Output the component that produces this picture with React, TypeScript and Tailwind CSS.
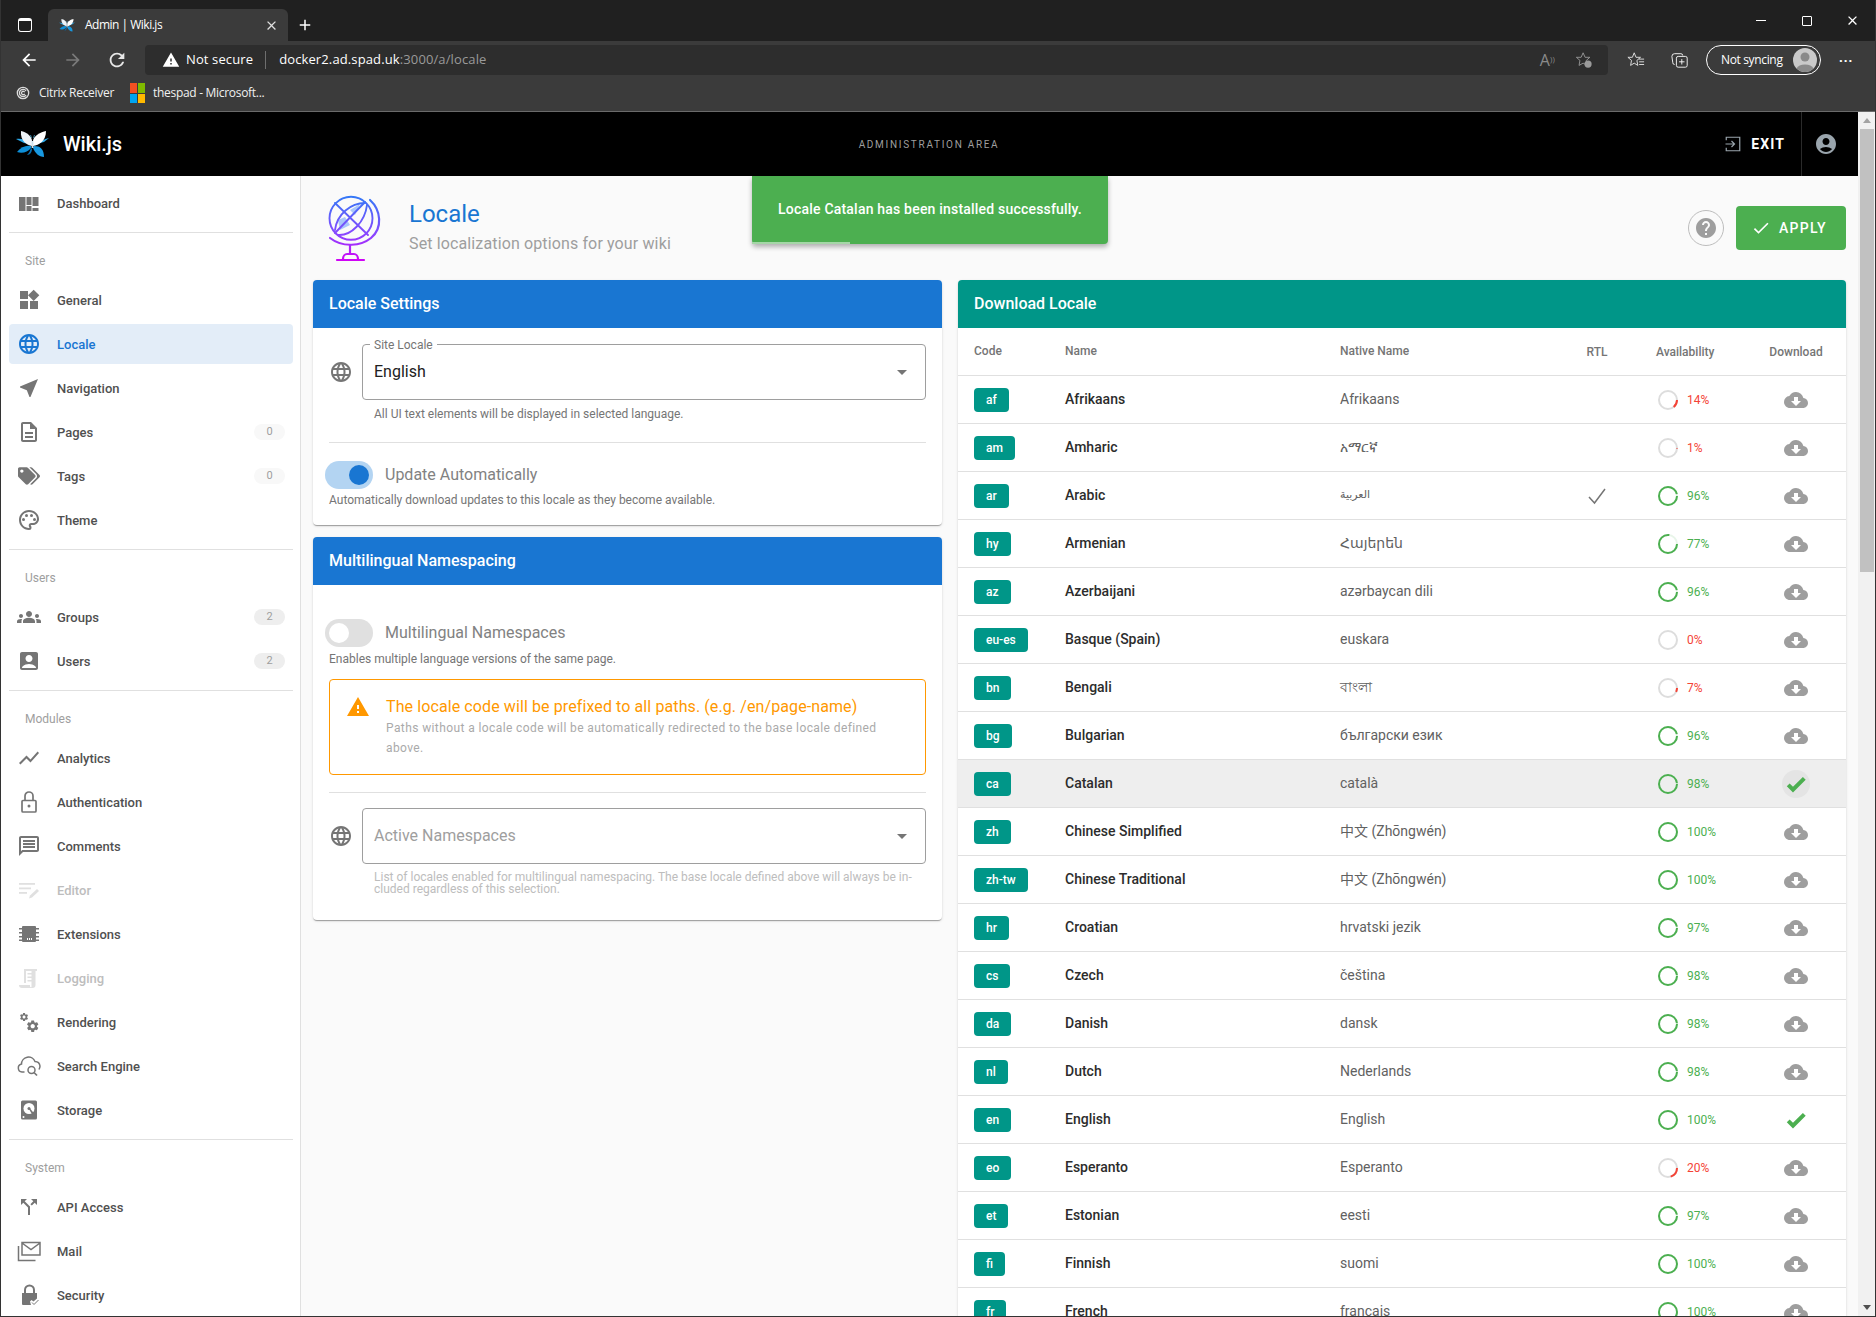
import { ReactNode } from 'react';
import {
  MdAccountBox,
  MdAccountCircle,
  MdAdd,
  MdArrowBack,
  MdArrowForward,
  MdCallSplit,
  MdCheck,
  MdClose,
  MdCloudDownload,
  MdGroups,
  MdHelp,
  MdLanguage,
  MdNearMe,
  MdOutlineDescription,
  MdOutlineMessage,
  MdOutlinePalette,
  MdRefresh,
  MdShowChart,
  MdWarning,
  MdWidgets,
} from 'react-icons/md';
import { FaTags } from 'react-icons/fa';

const GEAR =
  'M19.14 12.94c.04-.3.06-.61.06-.94 0-.32-.02-.64-.07-.94l2.03-1.58a.49.49 0 0 0 .12-.61l-1.92-3.32a.488.488 0 0 0-.59-.22l-2.39.96c-.5-.38-1.03-.7-1.62-.94l-.36-2.54a.484.484 0 0 0-.48-.41h-3.84c-.24 0-.43.17-.47.41l-.36 2.54c-.59.24-1.13.57-1.62.94l-2.39-.96c-.22-.08-.47 0-.59.22L2.74 8.87c-.12.21-.08.47.12.61l2.03 1.58c-.05.3-.09.63-.09.94s.02.64.07.94l-2.03 1.58a.49.49 0 0 0-.12.61l1.92 3.32c.12.22.37.29.59.22l2.39-.96c.5.38 1.03.7 1.62.94l.36 2.54c.05.24.24.41.48.41h3.84c.24 0 .44-.17.47-.41l.36-2.54c.59-.24 1.13-.56 1.62-.94l2.39.96c.22.08.47 0 .59-.22l1.92-3.32c.12-.22.07-.47-.12-.61l-2.01-1.58zM12 15.6c-1.98 0-3.6-1.62-3.6-3.6s1.62-3.6 3.6-3.6 3.6 1.62 3.6 3.6-1.62 3.6-3.6 3.6z';

function Svg({ children, className = 'w-6 h-6' }: { children: ReactNode; className?: string }) {
  return (
    <svg viewBox="0 0 24 24" fill="currentColor" className={className}>
      {children}
    </svg>
  );
}

const DashboardIcon = () => (
  <Svg>
    <rect x="2" y="6" width="6.500" height="14" />
    <rect x="9.500" y="6" width="5" height="8" />
    <rect x="9.500" y="15" width="5" height="5" />
    <rect x="15.500" y="6" width="6" height="9" />
    <rect x="15.500" y="17" width="6" height="3" />
  </Svg>
);

const LockIcon = () => (
  <Svg>
    <path
      d="M6 10.500h12a1 1 0 0 1 1 1V21a1 1 0 0 1-1 1H6a1 1 0 0 1-1-1v-9.500a1 1 0 0 1 1-1zM8 10.500V6a4 4 0 0 1 8 0v4.500"
      fill="none"
      stroke="currentColor"
      strokeWidth="1.700"
    />
    <circle cx="12" cy="16" r="1.500" />
  </Svg>
);

const EditorIcon = () => (
  <Svg>
    <rect x="2" y="5" width="16" height="1.800" />
    <rect x="2" y="9.500" width="12" height="1.800" />
    <rect x="2" y="14" width="8" height="1.800" />
    <path d="M12 20.500l1-3L20 11l2 2-7 6.500z" />
  </Svg>
);

const ChipIcon = () => (
  <Svg>
    <rect x="5" y="4" width="14" height="16" rx="1" />
    <path d="M2 6h3v1.500H2zM2 10h3v1.500H2zM2 14h3v1.500H2zM2 17.500h3V19H2zM19 6h3v1.500h-3zM19 10h3v1.500h-3zM19 14h3v1.500h-3zM19 17.500h3V19h-3z" />
    <path d="M10 16h1v2h-1zM12 16h1v2h-1zM14 16h1v2h-1z" fill="#fff" />
  </Svg>
);

const LogIcon = () => (
  <Svg>
    <path d="M7 3h13v2h-1.500v14a3 3 0 0 1-3 3H5a3 3 0 0 1-3-3h11v1.500a1 1 0 0 0 1.500.500V5H9v12H7z" />
    <path d="M10.500 7h4.500v1.500h-4.500zM10.500 10.500h4.500V12h-4.500zM10.500 14h4.500v1.500h-4.500z" />
  </Svg>
);

const GearsIcon = () => (
  <Svg>
    <g transform="translate(2 2) scale(0.42)">
      <path d={GEAR} />
    </g>
    <g transform="translate(8.500 9) scale(0.6)">
      <path d={GEAR} />
    </g>
  </Svg>
);

const SearchCloudIcon = () => (
  <Svg>
    <path
      d="M7.500 18H5a4 4 0 0 1-.5-7.900A7 7 0 0 1 18 7.500 5.200 5.200 0 0 1 23 12c0 1.500-.5 2.500-1 3.500"
      fill="none"
      stroke="currentColor"
      strokeWidth="1.500"
    />
    <circle cx="14.500" cy="16" r="3.500" fill="none" stroke="currentColor" strokeWidth="1.500" />
    <path d="M17 18.500l3 3" stroke="currentColor" strokeWidth="1.700" />
  </Svg>
);

const DiskIcon = () => (
  <Svg>
    <rect x="4" y="2.500" width="16" height="19" rx="1.500" />
    <circle cx="12" cy="10.500" r="5.500" fill="#fff" />
    <circle cx="12" cy="10.500" r="1.500" />
    <path d="M12 11l4 7 2-1.500-5-6z" />
    <circle cx="6.500" cy="19" r="1" fill="#fff" />
  </Svg>
);

const MailStackIcon = () => (
  <Svg>
    <path
      d="M5 6.500v-3h18V16H5zM5 4l9 6.500L23 4M1.500 7v14.500h17"
      fill="none"
      stroke="currentColor"
      strokeWidth="1.500"
    />
  </Svg>
);

const SecurityIcon = () => (
  <Svg>
    <path d="M8 10V7a4.500 4.500 0 0 1 9 0v3" fill="none" stroke="currentColor" strokeWidth="2" />
    <path d="M5 10h15v5.500l-3.500 3-2-1.500-1.500 1.500 1 3.500H6a1 1 0 0 1-1-1z" />
    <path d="M15 19.500l2 2 4.500-4.500" fill="none" stroke="currentColor" strokeWidth="1" />
  </Svg>
);

function WikiLogo({ className }: { className: string }) {
  return (
    <svg viewBox="0 0 33 27" className={className}>
      <path d="M0 8c5-1 10 1 14 5l-6-1z" fill="#2aa7e8" />
      <path d="M33 7c-5 1-9 4-13 6l8-2z" fill="#2aa7e8" />
      <path d="M15 15c-5-1-10 1-14 6 5 2 11 0 14-4z" fill="#0d8fd8" />
      <path d="M18 15c6 0 10 3 10 11-5 0-9-4-11-9z" fill="#1898e0" />
      <path d="M15 17c-1 3-2 5-4 7 3 0 5-3 5-6z" fill="#0a6fb0" />
      <path d="M16 15C11 14 4 10 5 0c5 1 11 5 11 10z" fill="#eef3f7" />
      <path d="M17 15c6-1 13-5 13-15-5 1-13 5-13 10z" fill="#ffffff" />
      <path d="M15.600 10h1.800v7h-1.800z" fill="#cfe3ef" />
      <path d="M15.500 7l-1-3M17.500 7l1-3" stroke="#4aa3c9" strokeWidth="0.800" fill="none" />
    </svg>
  );
}

function GlobeLogo() {
  return (
    <svg viewBox="0 0 64 70" className="w-16 h-[70px]" fill="none">
      <defs>
        <linearGradient id="globeGrad" gradientUnits="userSpaceOnUse" x1="0" y1="0" x2="0" y2="68">
          <stop offset="0" stopColor="#2f7cf6" />
          <stop offset="0.6" stopColor="#8a45ff" />
          <stop offset="1" stopColor="#d400f5" />
        </linearGradient>
      </defs>
      <path d="M29 16l10-6-5 11zM17 26l7-3 5 8-10 5z" fill="#a9c6fb" />
      <g stroke="url(#globeGrad)" strokeWidth="1.900" strokeLinecap="round">
        <circle cx="30" cy="24.300" r="21.500" />
        <path d="M14 9l33 32M44 8L14 39" />
        <path d="M44 9C30 9 16 20 14 36M46 11C44 28 30 42 17 41" />
        <path d="M49 6C60 16 62 34 50 44 40 52 22 54 9 44" strokeWidth="2.200" />
        <path d="M29 51v9M22 65c0-3 2-5 4-5h7c2 0 4 2 4 5M16 66h27" strokeWidth="2.200" />
      </g>
    </svg>
  );
}

function MsLogo() {
  return (
    <span className="grid grid-cols-2 gap-px w-[15px] h-5">
      <span className="bg-[#f25022]" />
      <span className="bg-[#7fba00]" />
      <span className="bg-[#00a4ef]" />
      <span className="bg-[#ffb900]" />
    </span>
  );
}

function BrowserChrome() {
  return (
    <div className="font-['Open_Sans','Noto_Sans',sans-serif] text-white">
      <div className="h-[41px] bg-[#202020] flex items-end">
        <div className="w-[47px] h-[32px] flex items-center pl-[17px]">
          <span className="w-[14px] h-[14px] rounded-[3px] border border-white border-t-[3px]" />
        </div>
        <div className="w-[240px] h-[32px] rounded-t-md bg-[#3b3b3b] flex items-center pl-[11px] pr-[9px]">
          <WikiLogo className="w-[16px] h-[13px]" />
          <span className="ml-[10px] text-[12px] flex-1 tracking-[-0.5px]">Admin | Wiki.js</span>
          <MdClose className="w-[15px] h-[15px] text-[#e0e0e0]" />
        </div>
        <MdAdd className="ml-[8px] mb-[7px] w-[18px] h-[18px]" />
        <div className="flex-1" />
        <div className="h-[41px] flex items-center text-white">
          <span className="w-[10px] h-px bg-white mr-[36px]" />
          <span className="w-[10px] h-[10px] border border-white rounded-[1px] mr-[33px]" />
          <MdClose className="w-[15px] h-[15px] mr-[15px]" />
        </div>
      </div>
      <div className="h-[71px] bg-[#3b3b3b] border-b border-[#6a6a6a] flex flex-col">
        <div className="h-[34px] pt-1 flex items-start">
          <div className="w-[144px] h-[30px] flex items-center pl-[18px]">
            <MdArrowBack className="w-5 h-5 text-white" />
            <MdArrowForward className="w-5 h-5 ml-6 text-[#7a7a7a]" />
            <MdRefresh className="w-[22px] h-[22px] ml-[23px] text-[#e8e8e8]" />
          </div>
          <div className="w-[1463px] h-[30px] bg-[#2d2d2d] rounded flex items-center pl-[17px] text-[13px] tracking-[0.12px]">
            <MdWarning className="w-[18px] h-[18px] text-white" />
            <span className="ml-[6px]">Not secure</span>
            <span className="w-px h-[18px] bg-[#6e6e6e] ml-[12px]" />
            <span className="ml-[13px]">docker2.ad.spad.uk</span>
            <span className="text-[#9a9a9a]">:3000/a/locale</span>
            <span className="flex-1" />
            <span className="text-[#8a8a8a] text-[16px] leading-none mr-[20px]">
              A<sup className="text-[8px]">))</sup>
            </span>
            <svg viewBox="0 0 20 20" className="w-[18px] h-[18px] mr-[15px] text-[#9a9a9a]" fill="none" stroke="currentColor">
              <path d="M9 2l2.200 5h5.300l-4 3.500 1 5.500L9 13.500 4.500 16l1-5.500-4-3.500h5.300z" />
              <circle cx="14.500" cy="14.500" r="4" fill="#9a9a9a" stroke="none" />
            </svg>
          </div>
          <div className="h-[30px] flex items-center ml-[19px]">
            <svg viewBox="0 0 20 20" className="w-[18px] h-[18px]" fill="none" stroke="#e8e8e8">
              <path d="M8 2l2 5h5l-4 3.500 1 5.500-4-2.500L4 16l1-5.500-4-3.500h5zM13 9h6M13.500 12h5.500M13.500 15h5.500" />
            </svg>
            <svg viewBox="0 0 20 20" className="w-[18px] h-[18px] ml-[26px]" fill="none" stroke="#ffffff">
              <rect x="6" y="6" width="12" height="12" rx="2" />
              <path d="M12 9v6M9 12h6M4 15a2 2 0 0 1-2-2l-1-7a3 3 0 0 1 3-3h7a2 2 0 0 1 2 2" />
            </svg>
            <div className="w-[115px] h-[30px] ml-[17px] rounded-full border border-white flex items-center justify-between pl-[14px] pr-[3px] text-[12px] tracking-[-0.35px]">
              Not syncing
              <svg viewBox="0 0 24 24" className="w-6 h-6">
                <circle cx="12" cy="12" r="12" fill="#c9c9c9" />
                <circle cx="12" cy="9" r="4.500" fill="#8a8a8a" />
                <path d="M3.500 20.500a9 6 0 0 1 17 0A12 12 0 0 1 3.500 20.500z" fill="#8a8a8a" />
              </svg>
            </div>
            <span className="ml-[18px] text-[13px] font-bold leading-none tracking-[1px]">···</span>
          </div>
        </div>
        <div className="h-[36px] flex items-center pl-[15px] text-[12px] tracking-[-0.3px] text-[#f0f0f0]">
          <svg viewBox="0 0 16 16" className="w-[14px] h-[14px]" fill="none" stroke="#dcdcdc" strokeWidth="1.500">
            <circle cx="8" cy="8" r="6.500" />
            <path d="M11.500 5.500a4.200 4.200 0 1 0 0 5M10 7a2 2 0 1 0 0 2" />
          </svg>
          <span className="ml-[9px]">Citrix Receiver</span>
          <span className="ml-4">
            <MsLogo />
          </span>
          <span className="ml-2">thespad - Microsoft...</span>
        </div>
      </div>
    </div>
  );
}

type NavItem = { label: string; icon: ReactNode; count?: number; countSoft?: boolean; active?: boolean; disabled?: boolean };

function NavRow({ item }: { item: NavItem }) {
  return (
    <div
      className={`h-10 mb-1 ml-2 mr-[7px] px-2 rounded flex items-center gap-4 ${
        item.active ? 'bg-[#e3edf8] text-[#1976d2]' : item.disabled ? 'text-[#bdbdbd]' : 'text-[#505050]'
      }`}
    >
      <span className={`w-6 h-6 shrink-0 ${item.active ? 'text-[#1976d2]' : item.disabled ? 'text-[#e0e0e0]' : 'text-[#757575]'}`}>
        {item.icon}
      </span>
      <span className="flex-1 text-[13px] font-medium pt-px">{item.label}</span>
      {item.count !== undefined && (
        <span
          className={`w-[31px] h-4 rounded-full flex items-center justify-center text-[11px] text-[#9e9e9e] ${
            item.countSoft ? 'bg-[#f8f8f8]' : 'bg-[#eeeeee]'
          }`}
        >
          {item.count}
        </span>
      )}
    </div>
  );
}

function NavSection({ title, items }: { title: string; items: NavItem[] }) {
  return (
    <div>
      <div className="h-[47px] pt-[8px] pl-[24px] flex items-center text-[12px] text-[#9e9e9e]">{title}</div>
      {items.map((item) => (
        <NavRow key={item.label} item={item} />
      ))}
    </div>
  );
}

// item margin and this one would collapse, so the full 9px goes here
const NavDivider = () => <div className="h-px bg-[#e0e0e0] mt-[9px] ml-2 mr-[7px]" />;

function Sidebar() {
  return (
    <div className="w-[300px] shrink-0 h-full bg-white border-r border-[#e0e0e0] overflow-hidden pt-[7px] font-['Roboto',sans-serif]">
      <NavRow item={{ label: 'Dashboard', icon: <DashboardIcon /> }} />
      <NavDivider />
      <NavSection
        title="Site"
        items={[
          { label: 'General', icon: <MdWidgets className="w-6 h-6" /> },
          { label: 'Locale', icon: <MdLanguage className="w-6 h-6" />, active: true },
          { label: 'Navigation', icon: <MdNearMe className="w-6 h-6" /> },
          { label: 'Pages', icon: <MdOutlineDescription className="w-6 h-6" />, count: 0, countSoft: true },
          { label: 'Tags', icon: <FaTags className="w-6 h-6 p-px" />, count: 0, countSoft: true },
          { label: 'Theme', icon: <MdOutlinePalette className="w-6 h-6" /> },
        ]}
      />
      <NavDivider />
      <NavSection
        title="Users"
        items={[
          { label: 'Groups', icon: <MdGroups className="w-6 h-6" />, count: 2 },
          { label: 'Users', icon: <MdAccountBox className="w-6 h-6" />, count: 2 },
        ]}
      />
      <NavDivider />
      <NavSection
        title="Modules"
        items={[
          { label: 'Analytics', icon: <MdShowChart className="w-6 h-6" /> },
          { label: 'Authentication', icon: <LockIcon /> },
          { label: 'Comments', icon: <MdOutlineMessage className="w-6 h-6" /> },
          { label: 'Editor', icon: <EditorIcon />, disabled: true },
          { label: 'Extensions', icon: <ChipIcon /> },
          { label: 'Logging', icon: <LogIcon />, disabled: true },
          { label: 'Rendering', icon: <GearsIcon /> },
          { label: 'Search Engine', icon: <SearchCloudIcon /> },
          { label: 'Storage', icon: <DiskIcon /> },
        ]}
      />
      <NavDivider />
      <NavSection
        title="System"
        items={[
          { label: 'API Access', icon: <MdCallSplit className="w-6 h-6" /> },
          { label: 'Mail', icon: <MailStackIcon /> },
          { label: 'Security', icon: <SecurityIcon /> },
        ]}
      />
    </div>
  );
}

function CardHeader({ title, color }: { title: string; color: string }) {
  return (
    <div className={`h-12 px-4 flex items-center rounded-t text-white text-[16px] font-medium ${color}`}>{title}</div>
  );
}

function SelectBox({ label, value, placeholder }: { label?: string; value?: string; placeholder?: string }) {
  return (
    <div className="flex items-center h-14">
      <MdLanguage className="w-6 h-6 text-[#757575] shrink-0" />
      <div className="relative ml-[9px] flex-1 h-14 rounded border border-[#9e9e9e] flex items-center px-[11px]">
        {label && (
          <span className="absolute -top-[7px] left-[7px] px-[4px] bg-white text-[12px] leading-[14px] text-[#757575]">
            {label}
          </span>
        )}
        <span className={`flex-1 text-[16px] -mt-[1px] ${value ? 'text-[#212121]' : 'text-[#9e9e9e]'}`}>
          {value ?? placeholder}
        </span>
        <span className="w-0 h-0 border-x-[5px] border-x-transparent border-t-[5px] border-t-[#757575] mr-[7px] mt-[1px]" />
      </div>
    </div>
  );
}

function Toggle({ on, label }: { on: boolean; label: string }) {
  return (
    <div className="flex items-center h-7 -ml-1">
      <div className={`w-12 h-7 rounded-full flex items-center ${on ? 'bg-[#b3d4f2] justify-end pr-[4px]' : 'bg-[#e0e0e0] pl-[4px]'}`}>
        <span className={`w-5 h-5 rounded-full ${on ? 'bg-[#1976d2]' : 'bg-white'}`} />
      </div>
      <span className="ml-3 text-[16px] text-[#828282]">{label}</span>
    </div>
  );
}

const CARD = 'bg-white rounded shadow-[0_2px_1px_-1px_rgba(0,0,0,0.2),0_1px_1px_0_rgba(0,0,0,0.14),0_1px_3px_0_rgba(0,0,0,0.12)]';

function LocaleSettingsCard() {
  return (
    <div className={CARD}>
      <CardHeader title="Locale Settings" color="bg-[#1976d2]" />
      <div className="px-4 pt-4 pb-[18px]">
        <SelectBox label="Site Locale" value="English" />
        <p className="ml-[45px] mt-[7px] text-[12px] leading-[14px] text-[#757575]">
          All UI text elements will be displayed in selected language.
        </p>
        <div className="h-px bg-[#e0e0e0] mt-[21px]" />
        <div className="mt-[18px]">
          <Toggle on label="Update Automatically" />
        </div>
        <p className="mt-1 text-[12px] leading-[14px] text-[#757575]">
          Automatically download updates to this locale as they become available.
        </p>
      </div>
    </div>
  );
}

function NamespacingCard() {
  return (
    <div className={`${CARD} mt-3`}>
      <CardHeader title="Multilingual Namespacing" color="bg-[#1976d2]" />
      <div className="px-4 pt-[34px] pb-[25px]">
        <Toggle on={false} label="Multilingual Namespaces" />
        <p className="mt-[5px] text-[12px] leading-[14px] text-[#757575]">
          Enables multiple language versions of the same page.
        </p>
        <div className="mt-[13px] h-[96px] rounded border border-[#ff9800] pl-4 pr-4 pt-[15px] flex gap-4">
          <MdWarning className="w-6 h-6 text-[#ff9800] shrink-0" />
          <div>
            <div className="text-[16px] leading-[23px] tracking-[0.1px] text-[#ff9800]">
              The locale code will be prefixed to all paths. (e.g. /en/page-name)
            </div>
            <div className="text-[12px] leading-5 tracking-[0.4px] text-[#aaaaaa]">
              Paths without a locale code will be automatically redirected to the base locale defined above.
            </div>
          </div>
        </div>
        <div className="h-px bg-[#e0e0e0] mt-[17px]" />
        <div className="mt-[15px]">
          <SelectBox placeholder="Active Namespaces" />
        </div>
        <p className="ml-[45px] mt-[7px] text-[12px] leading-3 text-[#bdbdbd]">
          List of locales enabled for multilingual namespacing. The base locale defined above will always be in-
          <br />
          cluded regardless of this selection.
        </p>
      </div>
    </div>
  );
}

function Ring({ pct }: { pct: number }) {
  const ok = pct >= 70;
  const r = 9;
  const c = 2 * Math.PI * r;
  return (
    <svg viewBox="0 0 20 20" className="w-5 h-5 shrink-0">
      <circle cx="10" cy="10" r={r} fill="none" stroke={ok ? '#e8f5e9' : '#dddddd'} strokeWidth="2" />
      <circle
        cx="10"
        cy="10"
        r={r}
        fill="none"
        stroke={ok ? '#4caf50' : '#f44336'}
        strokeWidth="2"
        strokeDasharray={`${(pct / 100) * c} ${c}`}
      />
    </svg>
  );
}

const CHECK_BOLD = 'M9,20.42L2.79,14.21L5.62,11.38L9,14.77L18.88,4.88L21.71,7.71L9,20.42Z';

type Locale = { code: string; name: string; native: string; pct: number; rtl?: boolean; installed?: boolean; active?: boolean };

const LOCALES: Locale[] = [
  { code: 'af', name: 'Afrikaans', native: 'Afrikaans', pct: 14 },
  { code: 'am', name: 'Amharic', native: 'አማርኛ', pct: 1 },
  { code: 'ar', name: 'Arabic', native: 'العربية', pct: 96, rtl: true },
  { code: 'hy', name: 'Armenian', native: 'Հայերեն', pct: 77 },
  { code: 'az', name: 'Azerbaijani', native: 'azərbaycan dili', pct: 96 },
  { code: 'eu-es', name: 'Basque (Spain)', native: 'euskara', pct: 0 },
  { code: 'bn', name: 'Bengali', native: 'বাংলা', pct: 7 },
  { code: 'bg', name: 'Bulgarian', native: 'български език', pct: 96 },
  { code: 'ca', name: 'Catalan', native: 'català', pct: 98, installed: true, active: true },
  { code: 'zh', name: 'Chinese Simplified', native: '中文 (Zhōngwén)', pct: 100 },
  { code: 'zh-tw', name: 'Chinese Traditional', native: '中文 (Zhōngwén)', pct: 100 },
  { code: 'hr', name: 'Croatian', native: 'hrvatski jezik', pct: 97 },
  { code: 'cs', name: 'Czech', native: 'čeština', pct: 98 },
  { code: 'da', name: 'Danish', native: 'dansk', pct: 98 },
  { code: 'nl', name: 'Dutch', native: 'Nederlands', pct: 98 },
  { code: 'en', name: 'English', native: 'English', pct: 100, installed: true },
  { code: 'eo', name: 'Esperanto', native: 'Esperanto', pct: 20 },
  { code: 'et', name: 'Estonian', native: 'eesti', pct: 97 },
  { code: 'fi', name: 'Finnish', native: 'suomi', pct: 100 },
  { code: 'fr', name: 'French', native: 'français', pct: 100 },
];

const COLS = 'grid grid-cols-[91px_275px_232px_50px_138px_72px] pl-4 h-12 items-center border-b border-[#e0e0e0]';

function DownloadCard() {
  return (
    <div className={CARD}>
      <CardHeader title="Download Locale" color="bg-[#009688]" />
      <div className={`${COLS} text-[12px] font-medium text-[#757575]`}>
        <span className="-mt-px">Code</span>
        <span className="-mt-px">Name</span>
        <span className="-mt-px">Native Name</span>
        <span className="text-center">RTL</span>
        <span className="pl-[34px]">Availability</span>
        <span className="text-center">Download</span>
      </div>
      {LOCALES.map((l) => (
        <div key={l.code} className={`${COLS} ${l.active ? 'bg-[#eeeeee]' : ''}`}>
          <span>
            <span className="inline-flex h-6 px-3 items-center rounded bg-[#009688] text-white text-[12px] font-medium">
              {l.code}
            </span>
          </span>
          <span className="text-[14px] font-medium text-[#2c2c2c]">{l.name}</span>
          <span
            className={`text-[#616161] font-['Roboto','Noto_Sans','DejaVu_Sans','Noto_Sans_CJK_SC',sans-serif] ${
              l.code === 'ar' ? 'text-[11px]' : 'text-[14px]'
            }`}
          >
            {l.native}
          </span>
          <span className="flex justify-center">
            {l.rtl && (
              <svg viewBox="0 0 24 24" className="w-6 h-6 text-[#757575]" fill="none" stroke="currentColor" strokeWidth="1.500">
                <path d="M4 13l5.500 6L20 5" />
              </svg>
            )}
          </span>
          <span className="pl-[36px] flex items-center gap-[9px]">
            <Ring pct={l.pct} />
            <span className={`text-[12px] ${l.pct >= 70 ? 'text-[#4caf50]' : 'text-[#f44336]'}`}>{l.pct}%</span>
          </span>
          <span className="flex justify-center">
            {l.installed ? (
              <span className={`w-7 h-7 rounded-full flex items-center justify-center ${l.active ? 'bg-[#e4e4e4]' : ''}`}>
                <Svg className="w-6 h-6 text-[#4caf50]">
                  <path d={CHECK_BOLD} />
                </Svg>
              </span>
            ) : (
              <MdCloudDownload className="w-6 h-6 text-[#9e9e9e]" />
            )}
          </span>
        </div>
      ))}
    </div>
  );
}

function MainArea() {
  return (
    <div className="relative flex-1 h-full bg-[#fafafa] overflow-hidden px-3 font-['Roboto',sans-serif]">
      <div className="h-[104px] pt-[18px] flex items-start">
        <div className="ml-2">
          <GlobeLogo />
        </div>
        <div className="ml-6">
          <h1 className="text-[24px] leading-[36px] text-[#1976d2] pt-[2px]">Locale</h1>
          <p className="text-[16px] leading-6 tracking-[0.13px] text-[#9e9e9e]">Set localization options for your wiki</p>
        </div>
        <div className="flex-1" />
        <div className="mt-[12px] flex items-center">
          <span className="w-9 h-9 rounded-full border border-[#bdbdbd] flex items-center justify-center">
            <MdHelp className="w-6 h-6 text-[#9e9e9e]" />
          </span>
          <span className="ml-3 w-[110px] h-11 rounded bg-[#4caf50] text-white flex items-center pl-[15px] gap-2 text-[14px] font-medium tracking-[1.25px]">
            <MdCheck className="w-5 h-5" />
            APPLY
          </span>
        </div>
      </div>
      <div className="grid grid-cols-[629px_888px] gap-4 items-start">
        <div>
          <LocaleSettingsCard />
          <NamespacingCard />
        </div>
        <DownloadCard />
      </div>
      <div className="absolute top-0 left-[451px] w-[356px] h-[68px] pb-[2px] bg-[#4caf50] rounded-b flex items-center justify-center text-white text-[14px] font-medium tracking-[0.2px] shadow-[0_3px_5px_rgba(0,0,0,0.3)]">
        Locale Catalan has been installed successfully.
        <span className="absolute left-0 bottom-0 w-[98px] h-[2px] bg-[#a5d6a7]" />
      </div>
    </div>
  );
}

function AppHeader() {
  return (
    <div className="relative h-16 shrink-0 bg-black text-white flex items-center font-['Roboto',sans-serif]">
      <WikiLogo className="w-[33px] h-[27px] ml-[15px]" />
      <span className="ml-[14px] text-[20px] font-medium">Wiki.js</span>
      <span className="absolute left-0 w-[1856px] text-center text-[10px] tracking-[1.7px] text-[#9e9e9e]">ADMINISTRATION AREA</span>
      <span className="flex-1" />
      <svg viewBox="0 0 24 24" className="w-[18px] h-[18px] text-[#9aa5ad]" fill="none" stroke="currentColor" strokeWidth="1.600">
        <path d="M3 7V3h18v18H3v-4M2 12h12M10 8l4 4-4 4" />
      </svg>
      <span className="ml-[9px] text-[14px] font-bold tracking-[1.1px]">EXIT</span>
      <span className="ml-4 w-px h-16 bg-[#2a2a2a]" />
      <span className="w-14 pr-2 flex justify-center">
        <MdAccountCircle className="w-6 h-6 text-[#9aa5ad]" />
      </span>
    </div>
  );
}

function Scrollbar() {
  return (
    <div className="w-[17px] h-full bg-[#f1f1f1] flex flex-col items-center shrink-0">
      <span className="mt-[6px] w-0 h-0 border-x-[4px] border-x-transparent border-b-[5px] border-b-[#a3a3a3]" />
      <span className="mt-[6px] w-[14px] h-[443px] bg-[#c1c1c1]" />
      <span className="flex-1" />
      <span className="mb-[6px] w-0 h-0 border-x-[4px] border-x-transparent border-t-[5px] border-t-[#505050]" />
    </div>
  );
}

export default function App() {
  return (
    <div className="w-[1876px] h-[1317px] overflow-hidden bg-[#202020] border-l border-r border-b border-[#333333] flex flex-col">
      <BrowserChrome />
      <div className="flex-1 min-h-0 flex">
        <div className="flex-1 min-w-0 flex flex-col">
          <AppHeader />
          <div className="flex-1 min-h-0 flex">
            <Sidebar />
            <MainArea />
          </div>
        </div>
        <Scrollbar />
      </div>
    </div>
  );
}
